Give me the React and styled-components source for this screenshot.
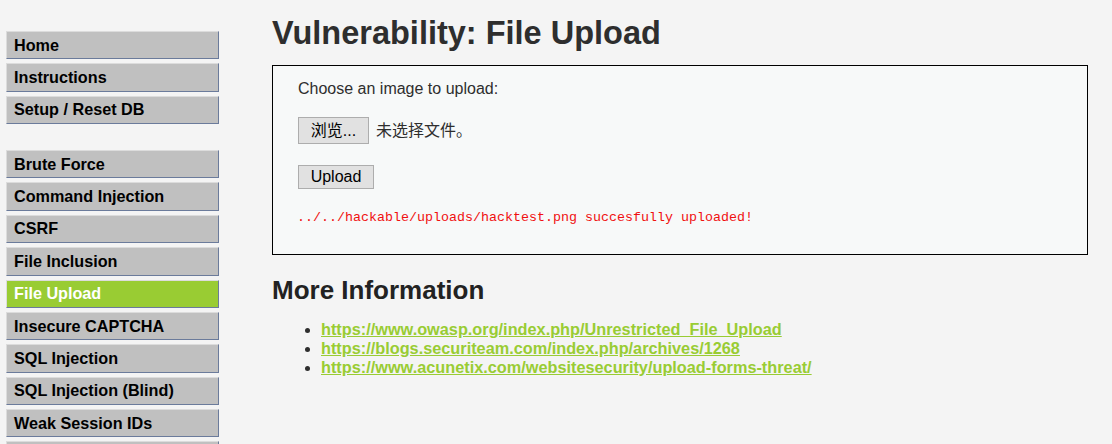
import React from "react";
import styled, { createGlobalStyle } from "styled-components";

const GlobalStyle = createGlobalStyle`
  html, body {
    margin: 0;
    padding: 0;
    background: #f4f4f4;
    overflow: hidden;
  }
  body {
    font-family: Arial, "Liberation Sans", "Noto Sans CJK SC", sans-serif;
    color: #2f2f2f;
  }
`;

const Page = styled.div`
  display: flex;
  align-items: flex-start;
  min-height: 444px;
`;

const Sidebar = styled.nav`
  width: 213px;
  margin-left: 6px;
  padding-top: 31px;
  display: flex;
  flex-direction: column;
  gap: 25.8px;
`;

const MenuGroup = styled.ul`
  list-style: none;
  margin: 0;
  padding: 0;
  display: flex;
  flex-direction: column;
  gap: 4px;
`;

const MenuItem = styled.li`
  box-sizing: border-box;
  height: 28.4px;
  display: flex;
  align-items: center;
  padding-left: 7px;
  background: ${(p) => (p.$active ? "#99cc33" : "#c0c0c0")};
  color: ${(p) => (p.$active ? "#ffffff" : "#000000")};
  border-top: 1px solid #dcdcdc;
  border-left: 1px solid #dcdcdc;
  border-right: 1.5px solid #6b7b9b;
  border-bottom: 1.5px solid #6b7b9b;
  font-family: Arial, "Liberation Sans", sans-serif;
  font-weight: bold;
  font-size: 16.2px;
  white-space: nowrap;
`;

const Main = styled.main`
  margin-left: 53px;
  width: 816px;
  padding-top: 15px;
`;

const Title = styled.h1`
  margin: 0 0 13px 0;
  font-size: 32.5px;
  line-height: 37px;
  font-weight: bold;
  color: #2e2e2e;
`;

const UploadBox = styled.div`
  box-sizing: border-box;
  height: 190px;
  border: 1px solid #000;
  background: #f7f9f9;
  padding: 14px 25px 0 25px;
`;

const Prompt = styled.p`
  margin: 0;
  font-size: 16px;
  line-height: 18px;
  color: #2e2e2e;
`;

const FileRow = styled.div`
  display: flex;
  align-items: center;
  gap: 7px;
  margin-top: 19px;
  height: 27px;
`;

const FormButton = styled.button`
  box-sizing: border-box;
  width: ${(p) => p.$w}px;
  height: ${(p) => p.$h}px;
  padding: 0;
  margin: 0;
  background: #e1e1e1;
  border: 1px solid #adadad;
  border-radius: 0;
  color: #000;
  font-family: Arial, "Liberation Sans", "Noto Sans CJK SC", sans-serif;
  font-size: 16px;
  line-height: 18px;
  display: flex;
  align-items: center;
  justify-content: center;
`;

const NoFile = styled.span`
  font-family: Arial, "Liberation Sans", "Noto Sans CJK SC", sans-serif;
  font-size: 16px;
  line-height: 18px;
  color: #2e2e2e;
`;

const SubmitRow = styled.div`
  margin-top: 21px;
`;

const Message = styled.pre`
  margin: 21px 0 0 -1px;
  font-family: "Liberation Mono", "Courier New", monospace;
  font-size: 13.33px;
  line-height: 16px;
  color: #f01010;
`;

const SubTitle = styled.h2`
  margin: 20px 0 0 0;
  font-size: 26px;
  line-height: 30px;
  font-weight: bold;
  color: #222;
`;

const LinkList = styled.ul`
  margin: 15px 0 0 0;
  padding-left: 49px;
  list-style: disc;
  color: #2e2e2e;
  font-size: 16px;
  line-height: 19px;
`;

const Link = styled.a`
  color: #99cc33;
  font-weight: bold;
  font-size: 16.3px;
  text-decoration: underline;
`;

const groups = [
  ["Home", "Instructions", "Setup / Reset DB"],
  [
    "Brute Force",
    "Command Injection",
    "CSRF",
    "File Inclusion",
    "File Upload",
    "Insecure CAPTCHA",
    "SQL Injection",
    "SQL Injection (Blind)",
    "Weak Session IDs",
    "XSS (DOM)",
    "XSS (Reflected)",
    "XSS (Stored)",
  ],
];

const links = [
  "https://www.owasp.org/index.php/Unrestricted_File_Upload",
  "https://blogs.securiteam.com/index.php/archives/1268",
  "https://www.acunetix.com/websitesecurity/upload-forms-threat/",
];

export default function App() {
  return (
    <>
      <GlobalStyle />
      <Page>
        <Sidebar>
          {groups.map((g, i) => (
            <MenuGroup key={i}>
              {g.map((item) => (
                <MenuItem key={item} $active={item === "File Upload"}>
                  {item}
                </MenuItem>
              ))}
            </MenuGroup>
          ))}
        </Sidebar>
        <Main>
          <Title>Vulnerability: File Upload</Title>
          <UploadBox>
            <Prompt>Choose an image to upload:</Prompt>
            <FileRow>
              <FormButton type="button" $w={71} $h={27}>浏览...</FormButton>
              <NoFile>未选择文件。</NoFile>
            </FileRow>
            <SubmitRow>
              <FormButton type="button" $w={76} $h={24}>Upload</FormButton>
            </SubmitRow>
            <Message>../../hackable/uploads/hacktest.png succesfully uploaded!</Message>
          </UploadBox>
          <SubTitle>More Information</SubTitle>
          <LinkList>
            {links.map((l) => (
              <li key={l}>
                <Link href={l}>{l}</Link>
              </li>
            ))}
          </LinkList>
        </Main>
      </Page>
    </>
  );
}
